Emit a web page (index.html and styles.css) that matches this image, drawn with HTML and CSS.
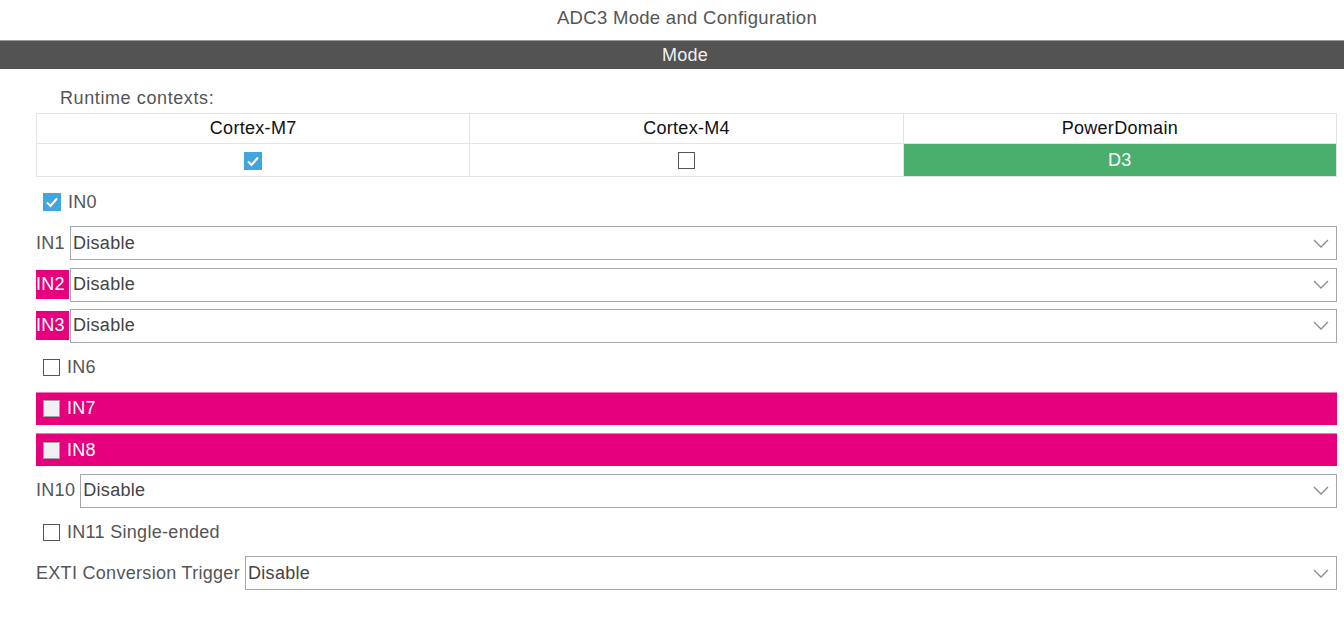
FILE: index.html
```html
<!DOCTYPE html>
<html lang="en">
<head>
  <meta charset="utf-8" />
  <title>ADC3 Mode and Configuration</title>
  <link rel="stylesheet" href="styles.css">
</head>
<body>

  <div class="page-title">ADC3 Mode and Configuration</div>

  <div class="mode-bar">Mode</div>

  <div class="content">
    <div class="runtime-label">Runtime contexts:</div>

    <!-- runtime contexts table -->
    <table class="contexts">
      <tr class="head">
        <td>Cortex-M7</td>
        <td>Cortex-M4</td>
        <td>PowerDomain</td>
      </tr>
      <tr class="values">
        <td><span class="box checked"><svg viewBox="0 0 18 18"><polyline points="4,9.5 7.5,13 14,5.5" /></svg></span></td>
        <td><span class="box"></span></td>
        <td class="domain">D3</td>
      </tr>
    </table>

    <div class="rows">
      <div class="check-row">
        <span class="box checked"><svg viewBox="0 0 18 18"><polyline points="4,9.5 7.5,13 14,5.5" /></svg></span>
        <span>IN0</span>
      </div>

      <div class="select-row">
        <span class="label">IN1</span>
        <div class="select"><span>Disable</span><svg class="chevron" viewBox="0 0 16 9"><polyline points="1,1 8,8 15,1" /></svg></div>
      </div>

      <div class="select-row">
        <span class="label warn">IN2</span>
        <div class="select"><span>Disable</span><svg class="chevron" viewBox="0 0 16 9"><polyline points="1,1 8,8 15,1" /></svg></div>
      </div>

      <div class="select-row">
        <span class="label warn">IN3</span>
        <div class="select"><span>Disable</span><svg class="chevron" viewBox="0 0 16 9"><polyline points="1,1 8,8 15,1" /></svg></div>
      </div>

      <div class="check-row">
        <span class="box"></span>
        <span>IN6</span>
      </div>

      <div class="check-row warn">
        <span class="box disabled"></span>
        <span>IN7</span>
      </div>

      <div class="check-row warn">
        <span class="box disabled"></span>
        <span>IN8</span>
      </div>

      <div class="select-row">
        <span class="label">IN10</span>
        <div class="select"><span>Disable</span><svg class="chevron" viewBox="0 0 16 9"><polyline points="1,1 8,8 15,1" /></svg></div>
      </div>

      <div class="check-row">
        <span class="box"></span>
        <span>IN11 Single-ended</span>
      </div>

      <div class="select-row">
        <span class="label">EXTI Conversion Trigger</span>
        <div class="select"><span>Disable</span><svg class="chevron" viewBox="0 0 16 9"><polyline points="1,1 8,8 15,1" /></svg></div>
      </div>
    </div>
  </div>

</body>
</html>
```

FILE: styles.css
```css
body {
  font-family: "Liberation Sans", Arial, sans-serif;
  font-size: 18px;
  letter-spacing: 0.3px;
  color: #555;
  background-color: #fff;
  margin: 0;
}

.page-title {
  height: 40px;
  line-height: 36px;
  text-align: center;
  font-size: 18.5px;
  padding-left: 30px;
}

.mode-bar {
  height: 28px;
  line-height: 28px;
  border-top: 1px solid #9a9a9a;
  background-color: #525352;
  color: #f0f0f0;
  text-align: center;
  padding-left: 26px;
}

.content {
  padding: 0 7px 0 36px;
}

.runtime-label {
  margin: 18px 0 4px 24px;
  line-height: 22px;
  letter-spacing: 0.6px;
}

/* contexts table */
.contexts {
  width: 100%;
  border-collapse: collapse;
  table-layout: fixed;
}

.contexts td {
  border: 1px solid #e1e5ea;
  text-align: center;
  padding: 0;
  vertical-align: middle;
}

.contexts .head td {
  height: 29px;
  color: #111;
}

.contexts .values td {
  height: 32px;
}

.contexts .domain {
  background-color: #4aaf6d;
  color: #fff;
}

/* checkboxes */
.box {
  display: inline-block;
  width: 15px;
  height: 15px;
  border: 1.5px solid #555;
  background-color: #fff;
  vertical-align: middle;
  flex-shrink: 0;
}

.box.checked {
  width: 18px;
  height: 18px;
  border: none;
  background-color: #41a5de;
}

.box.checked svg {
  display: block;
  width: 18px;
  height: 18px;
  fill: none;
  stroke: #fff;
  stroke-width: 2;
}

.box.disabled {
  border-color: #a0a0a0;
  background-color: #eef0f2;
}

/* rows */
.rows {
  display: flex;
  flex-direction: column;
  gap: 8.25px;
  margin-top: 8.5px;
}

.check-row {
  display: flex;
  align-items: center;
  gap: 7px;
  height: 33px;
  padding-left: 7px;
}

.check-row.warn {
  background-color: #e6007e;
  border-top: 1px solid #f07ab8;
  height: 32px;
  color: #fff;
}

.select-row {
  display: flex;
  align-items: center;
  height: 33px;
}

.label {
  padding-right: 5px;
  white-space: nowrap;
}

.label.warn {
  background-color: #e6007e;
  color: #fff;
  line-height: 29px;
  padding-right: 4px;
  margin-right: 1px;
}

.select {
  flex: 1;
  display: flex;
  align-items: center;
  justify-content: space-between;
  height: 32px;
  border: 1px solid #a4a8ac;
  padding: 0 7px 0 2px;
  color: #444;
}

.chevron {
  width: 16px;
  height: 9px;
  fill: none;
  stroke: #8a8a8a;
  stroke-width: 1.3;
}
```
